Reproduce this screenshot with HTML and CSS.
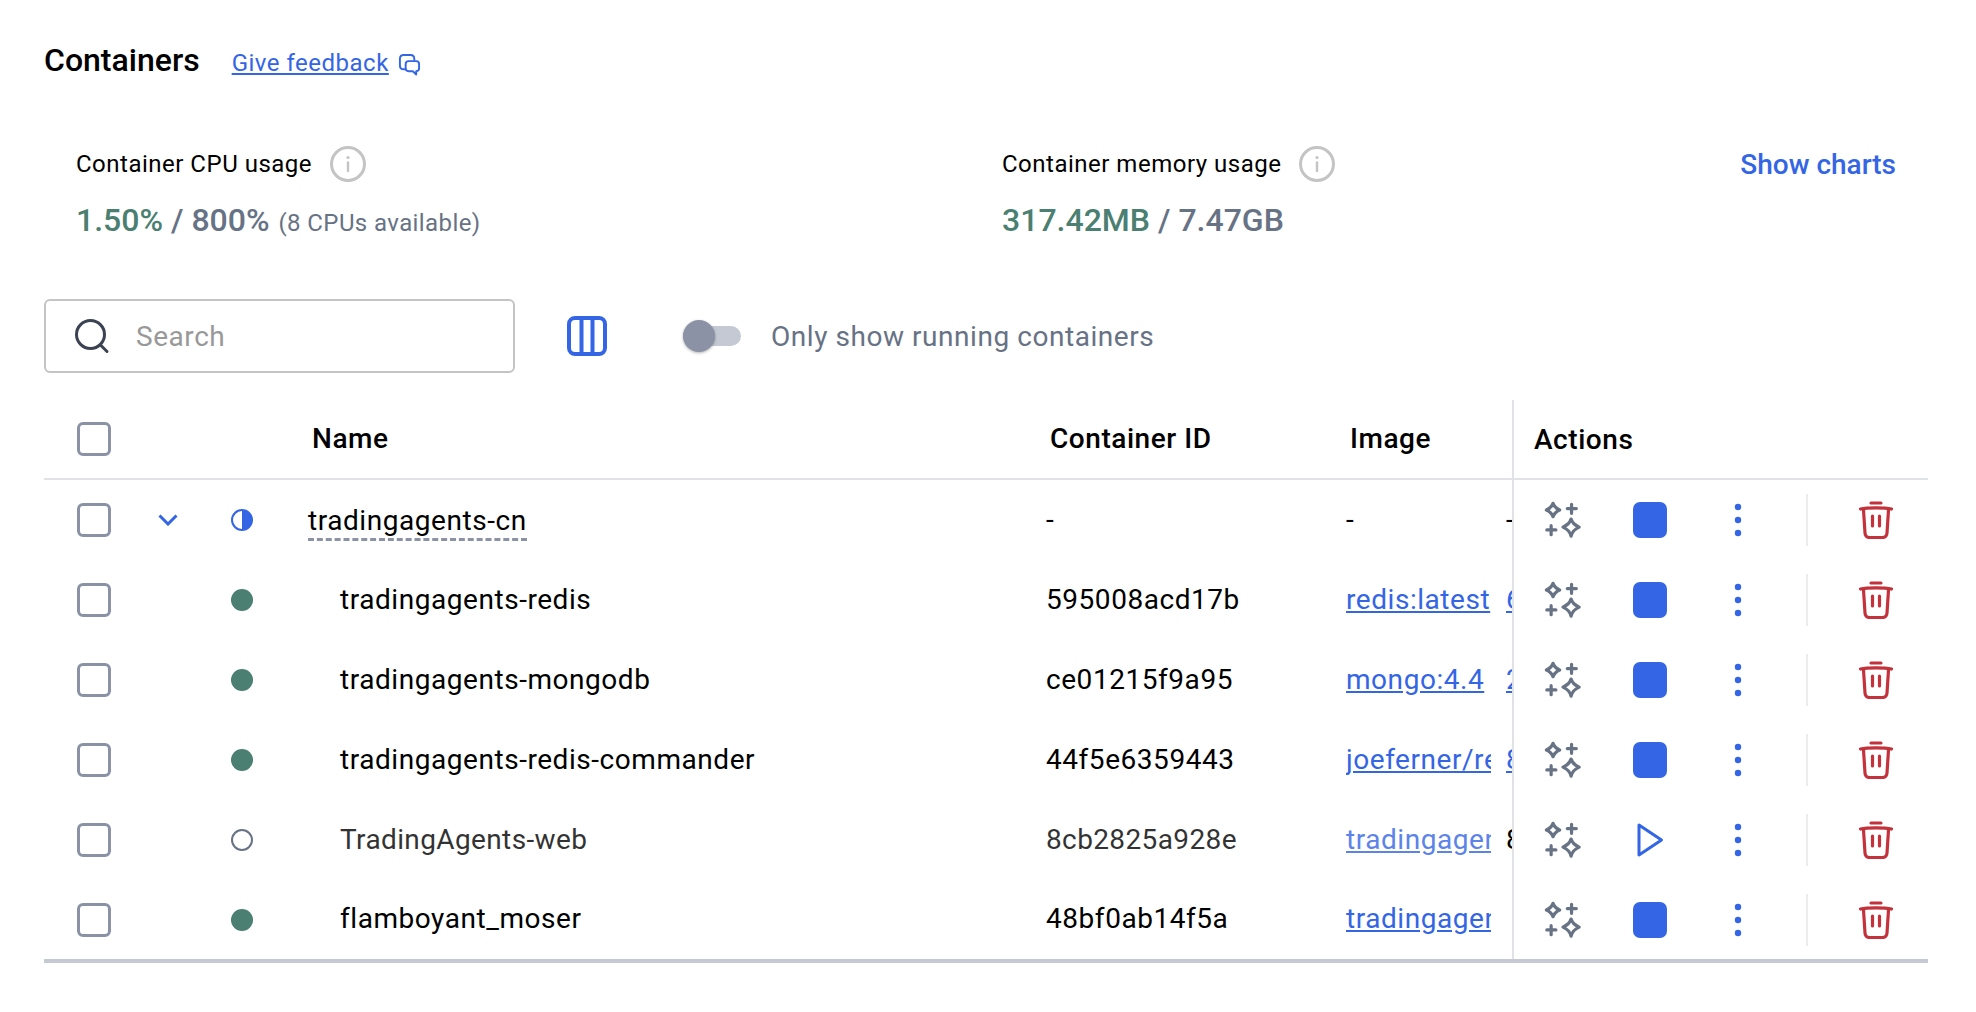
FILE: index.html
```html
<!DOCTYPE html>
<html lang="en">
<head>
    <meta charset="UTF-8">
    <title>Containers</title>
    <link rel="stylesheet" href="styles.css">
</head>
<body>
    <svg class="defs" width="0" height="0">
        <symbol id="i-ask" viewBox="0 0 40 40">
            <g fill="none" stroke="currentColor" stroke-width="3.4" stroke-linejoin="round" stroke-linecap="round">
                <path d="M9.5 2.5 C10.5 5.5 13 8 16.5 9.5 C13 11 10.5 13.5 9.5 16.5 C8.5 13.5 6 11 2.5 9.5 C6 8 8.5 5.5 9.5 2.5 Z"/>
                <path d="M28.5 19 C29.5 22.5 32.5 25.5 37 27.5 C32.5 29.5 29.5 32.5 28.5 37 C27.5 32.5 24.5 29.5 20 27.5 C24.5 25.5 27.5 22.5 28.5 19 Z"/>
                <path d="M29 3.5 V13 M24.5 8 H34"/>
                <path d="M7.5 26 V35.5 M3 30.5 H12.5"/>
            </g>
        </symbol>
        <symbol id="i-dots" viewBox="0 0 8 36">
            <circle cx="4" cy="5" r="3.2" fill="currentColor"/>
            <circle cx="4" cy="18" r="3.2" fill="currentColor"/>
            <circle cx="4" cy="31" r="3.2" fill="currentColor"/>
        </symbol>
        <symbol id="i-trash" viewBox="0 0 34 38">
            <g fill="none" stroke="currentColor" stroke-width="3.2" stroke-linecap="round" stroke-linejoin="round">
                <path d="M12 2 H22"/>
                <path d="M1.5 8 C8 6.4 26 6.4 32.5 8"/>
                <path d="M4.5 9 L6 32 C6.2 35 8 36.5 10.5 36.5 H23.5 C26 36.5 27.8 35 28 32 L29.5 9"/>
                <path d="M13.5 15 V25 M20.5 15 V25"/>
            </g>
        </symbol>
    </svg>

    <header class="title-row">
        <h1>Containers</h1>
        <a class="feedback" href="#">Give feedback</a>
        <svg class="feedback-icon" viewBox="0 0 24 24" fill="none" stroke="currentColor" stroke-width="2" stroke-linejoin="round">
            <path d="M8 17 H6 C3.5 17 2 15.5 2 13 V6 C2 3.5 3.5 2 6 2 H13 C15.5 2 17 3.5 17 6 V8"/>
            <path d="M11 8.5 H19 C21 8.5 22 9.5 22 11.5 V16 C22 18 21 19 19 19 V22.5 L15.5 19 H11 C9 19 8 18 8 16 V11.5 C8 9.5 9 8.5 11 8.5 Z"/>
        </svg>
    </header>

    <section class="metrics">
        <div class="metric metric-cpu">
            <div class="metric-label">Container CPU usage
                <svg class="info" viewBox="0 0 36 36"><circle cx="18" cy="18" r="16.5" fill="none" stroke="currentColor" stroke-width="3"/><circle cx="18" cy="11.5" r="1.6" fill="currentColor"/><path d="M18 16.5 V25" stroke="currentColor" stroke-width="2.4" stroke-linecap="round"/></svg>
            </div>
            <div class="metric-value"><span class="used">1.50%</span> / 800% <small>(8 CPUs available)</small></div>
        </div>
        <div class="metric metric-mem">
            <div class="metric-label">Container memory usage
                <svg class="info" viewBox="0 0 36 36"><circle cx="18" cy="18" r="16.5" fill="none" stroke="currentColor" stroke-width="3"/><circle cx="18" cy="11.5" r="1.6" fill="currentColor"/><path d="M18 16.5 V25" stroke="currentColor" stroke-width="2.4" stroke-linecap="round"/></svg>
            </div>
            <div class="metric-value"><span class="used">317.42MB</span> / 7.47GB</div>
        </div>
        <a class="show-charts" href="#">Show charts</a>
    </section>

    <section class="toolbar">
        <div class="search">
            <svg class="search-icon" viewBox="0 0 36 36" fill="none" stroke="#3b4252" stroke-width="3" stroke-linecap="round"><circle cx="16.5" cy="16.5" r="14"/><path d="M26.5 27 L33 33.5"/></svg>
            <input type="text" placeholder="Search">
        </div>
        <svg class="columns-icon" viewBox="0 0 40 40" fill="none" stroke="#3365e5" stroke-width="4"><rect x="2" y="2" width="36" height="36" rx="6"/><path d="M14.5 2 V38 M25.5 2 V38"/></svg>
        <div class="toggle"><span class="thumb"></span></div>
        <span class="toggle-label">Only show running containers</span>
    </section>

    <section class="table">
        <div class="row head">
            <div class="c-check"><span class="checkbox"></span></div>
            <div class="c-expand"></div>
            <div class="c-status"></div>
            <div class="c-name">Name</div>
            <div class="c-id">Container ID</div>
            <div class="c-image">Image</div>
            <div class="c-port"></div>
            <div class="c-actions">Actions</div>
        </div>

        <div class="row group">
            <div class="c-check"><span class="checkbox"></span></div>
            <div class="c-expand"><svg class="chevron" viewBox="0 0 20 12" fill="none" stroke="#3365e5" stroke-width="3"><path d="M1.5 1.5 L10 10 L18.5 1.5"/></svg></div>
            <div class="c-status"><span class="dot half"></span></div>
            <div class="c-name"><span class="group-name">tradingagents-cn</span></div>
            <div class="c-id">-</div>
            <div class="c-image">-</div>
            <div class="c-port">-</div>
            <div class="c-actions">
                <svg class="ask"><use href="#i-ask"/></svg>
                <span class="stop"></span>
                <svg class="dots"><use href="#i-dots"/></svg>
                <span class="trash-cell"><svg class="trash"><use href="#i-trash"/></svg></span>
            </div>
        </div>

        <div class="row">
            <div class="c-check"><span class="checkbox"></span></div>
            <div class="c-expand"></div>
            <div class="c-status"><span class="dot running"></span></div>
            <div class="c-name child">tradingagents-redis</div>
            <div class="c-id">595008acd17b</div>
            <div class="c-image"><a href="#">redis:latest</a></div>
            <div class="c-port"><a href="#">6379:6379</a></div>
            <div class="c-actions">
                <svg class="ask"><use href="#i-ask"/></svg>
                <span class="stop"></span>
                <svg class="dots"><use href="#i-dots"/></svg>
                <span class="trash-cell"><svg class="trash"><use href="#i-trash"/></svg></span>
            </div>
        </div>

        <div class="row">
            <div class="c-check"><span class="checkbox"></span></div>
            <div class="c-expand"></div>
            <div class="c-status"><span class="dot running"></span></div>
            <div class="c-name child">tradingagents-mongodb</div>
            <div class="c-id">ce01215f9a95</div>
            <div class="c-image"><a href="#">mongo:4.4</a></div>
            <div class="c-port"><a href="#">27017:27017</a></div>
            <div class="c-actions">
                <svg class="ask"><use href="#i-ask"/></svg>
                <span class="stop"></span>
                <svg class="dots"><use href="#i-dots"/></svg>
                <span class="trash-cell"><svg class="trash"><use href="#i-trash"/></svg></span>
            </div>
        </div>

        <div class="row">
            <div class="c-check"><span class="checkbox"></span></div>
            <div class="c-expand"></div>
            <div class="c-status"><span class="dot running"></span></div>
            <div class="c-name child">tradingagents-redis-commander</div>
            <div class="c-id">44f5e6359443</div>
            <div class="c-image"><a href="#">joeferner/redis-commander</a></div>
            <div class="c-port"><a href="#">8081:8081</a></div>
            <div class="c-actions">
                <svg class="ask"><use href="#i-ask"/></svg>
                <span class="stop"></span>
                <svg class="dots"><use href="#i-dots"/></svg>
                <span class="trash-cell"><svg class="trash"><use href="#i-trash"/></svg></span>
            </div>
        </div>

        <div class="row stopped">
            <div class="c-check"><span class="checkbox"></span></div>
            <div class="c-expand"></div>
            <div class="c-status"><span class="dot exited"></span></div>
            <div class="c-name child">TradingAgents-web</div>
            <div class="c-id">8cb2825a928e</div>
            <div class="c-image"><a href="#">tradingagents-web</a></div>
            <div class="c-port">8501</div>
            <div class="c-actions">
                <svg class="ask"><use href="#i-ask"/></svg>
                <svg class="play" viewBox="0 0 28 36" fill="none" stroke="#3365e5" stroke-width="3" stroke-linejoin="round"><path d="M3 3 L25.5 18 L3 33 Z"/></svg>
                <svg class="dots"><use href="#i-dots"/></svg>
                <span class="trash-cell"><svg class="trash"><use href="#i-trash"/></svg></span>
            </div>
        </div>

        <div class="row last">
            <div class="c-check"><span class="checkbox"></span></div>
            <div class="c-expand"></div>
            <div class="c-status"><span class="dot running"></span></div>
            <div class="c-name child">flamboyant_moser</div>
            <div class="c-id">48bf0ab14f5a</div>
            <div class="c-image"><a href="#">tradingagents-web</a></div>
            <div class="c-port"></div>
            <div class="c-actions">
                <svg class="ask"><use href="#i-ask"/></svg>
                <span class="stop"></span>
                <svg class="dots"><use href="#i-dots"/></svg>
                <span class="trash-cell"><svg class="trash"><use href="#i-trash"/></svg></span>
            </div>
        </div>
    </section>
</body>
</html>
```

FILE: styles.css
```css
* {
    box-sizing: border-box;
}
body {
    margin: 0;
    padding: 0 48px 0 44px;
    background-color: #fff;
    color: #000;
    font-family: 'Roboto', sans-serif;
    font-size: 28px;
    letter-spacing: 0.55px;
    overflow: hidden;
}
a {
    color: #3365e5;
}
.defs {
    position: absolute;
}

/* title */
.title-row {
    display: flex;
    align-items: center;
    height: 40px;
    margin-top: 40px;
}
h1 {
    margin: 0 32px 0 0;
    font-size: 32px;
    font-weight: 500;
    line-height: 40px;
    letter-spacing: 0;
}
.feedback {
    font-size: 24px;
    letter-spacing: 0.5px;
    margin-top: 6px;
}
.feedback-icon {
    width: 23px;
    height: 23px;
    margin: 8px 0 0 9px;
    color: #3365e5;
}

/* cpu + memory */
.metrics {
    display: flex;
    height: 96px;
    margin-top: 64px;
    padding: 0 32px 0 32px;
}
.metric-cpu {
    width: 926px;
}
.metric-label {
    display: flex;
    align-items: center;
    height: 40px;
    font-size: 24px;
    letter-spacing: 0.5px;
}
.info {
    width: 36px;
    height: 36px;
    margin-left: 18px;
    color: #c4c4c4;
}
.metric-value {
    margin-top: 16px;
    font-size: 32px;
    font-weight: 500;
    line-height: 40px;
    letter-spacing: 0;
    color: #677285;
}
.metric-value small {
    font-size: 24px;
    font-weight: 400;
    letter-spacing: 0.4px;
    margin-left: 1px;
}
.used {
    color: #4a7f71;
}
.show-charts {
    margin: 1px 0 0 auto;
    line-height: 40px;
    font-size: 28px;
    font-weight: 500;
    letter-spacing: 0;
    text-decoration: none;
    height: 40px;
}

/* search row */
.toolbar {
    display: flex;
    align-items: center;
    margin-top: 59px;
}
.search {
    display: flex;
    align-items: center;
    width: 471px;
    height: 74px;
    padding-left: 28px;
    border: 2px solid #c4c4c4;
    border-radius: 6px;
}
.search-icon {
    width: 36px;
    height: 36px;
    flex: none;
}
.search input {
    width: 300px;
    margin-left: 26px;
    padding: 0;
    border: none;
    outline: none;
    font-family: inherit;
    font-size: 28px;
    letter-spacing: 0.55px;
}
.search input::placeholder {
    color: #999;
}
.columns-icon {
    width: 40px;
    height: 40px;
    margin-left: 52px;
}
.toggle {
    position: relative;
    width: 58px;
    height: 20px;
    margin-left: 76px;
    border-radius: 10px;
    background-color: #c5c9d3;
}
.thumb {
    position: absolute;
    left: 0;
    top: -6px;
    width: 32px;
    height: 32px;
    border-radius: 50%;
    background-color: #8b92a5;
    box-shadow: 0 1px 3px rgba(0,0,0,0.3);
}
.toggle-label {
    margin-left: 30px;
    color: #677285;
}

/* table */
.table {
    margin-top: 27px;
}
.row {
    display: grid;
    grid-template-columns: 88px 72px 76px 764px 300px 162px 6px 416px;
    align-items: center;
    height: 80px;
    white-space: nowrap;
}
.row > div {
    overflow: hidden;
}
.head {
    height: 80px;
    border-bottom: 2px solid #e1e2e6;
    font-weight: 500;
}
.last {
    height: 83px;
    border-bottom: 4px solid #c5c9d3;
}
.row > .c-actions {
    display: flex;
    align-items: center;
    align-self: stretch;
    padding-left: 20px;
    border-left: 2px solid #e1e2e6;
}
.c-check {
    padding-left: 33px;
    display: flex;
}
.checkbox {
    width: 34px;
    height: 34px;
    border: 3.5px solid #8b92a5;
    border-radius: 6px;
}
.c-expand,
.c-status {
    display: flex;
    justify-content: center;
}
.chevron {
    width: 20px;
    height: 12px;
}
.dot {
    width: 22px;
    height: 22px;
    border-radius: 50%;
}
.running {
    background-color: #4a7f71;
}
.exited {
    border: 2px solid #677285;
}
.half {
    border: 2px solid #3365e5;
    background: linear-gradient(90deg, transparent 50%, #3365e5 50%);
}
.c-name {
    padding-left: 28px;
    padding-bottom: 2px;
}
.head .c-name {
    padding-left: 32px;
}
.child {
    padding-left: 60px;
}
.group .c-name {
    padding-top: 4px;
    padding-bottom: 0;
}
.group-name {
    display: inline-block;
    padding-bottom: 1px;
    border-bottom: 3px dashed #8b92a5;
}
.c-id {
    padding-left: 2px;
    padding-bottom: 2px;
}
.head .c-id {
    padding-left: 6px;
}
.c-image {
    padding: 0 15px 2px 2px;
}
.c-port {
    padding-bottom: 2px;
}
.c-image a {
    display: block;
    overflow: hidden;
}
.head .c-image {
    padding-left: 6px;
}
.stopped .c-name,
.stopped .c-id {
    opacity: 0.8;
    letter-spacing: 0.38px;
}
.stopped .c-image a {
    opacity: 0.8;
}
.ask {
    width: 38px;
    height: 38px;
    margin-left: 10px;
    color: #677285;
}
.stop {
    width: 34px;
    height: 36px;
    margin-left: 51px;
    border-radius: 7px;
    background-color: #3365e5;
}
.play {
    width: 28px;
    height: 36px;
    margin: 0 3px 0 54px;
}
.dots {
    width: 8px;
    height: 36px;
    margin-left: 67px;
    color: #3365e5;
}
.trash-cell {
    display: flex;
    align-items: center;
    height: 52px;
    margin-left: 64px;
    padding-left: 51px;
    border-left: 2px solid #ececec;
}
.trash {
    width: 34px;
    height: 38px;
    color: #c4323c;
}
```
